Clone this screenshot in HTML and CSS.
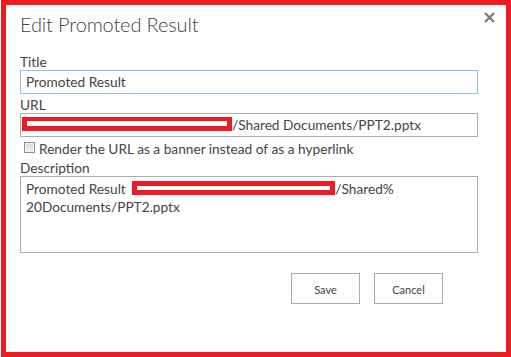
FILE: index.html
```html
<!DOCTYPE html>
<html>
<head>
<meta charset="utf-8">
<link rel="stylesheet" href="styles.css">
</head>
<body>
<div class="frame">
  <div class="header">
    <h1 class="title">Edit Promoted Result</h1>
    <span class="close">
      <svg width="11" height="11" viewBox="0 0 11 11"><path d="M1 1 L10 10 M10 1 L1 10" stroke="#777" stroke-width="2.2" fill="none"/></svg>
    </span>
  </div>
  <div class="label label-first">Title</div>
  <div class="field field-focus">Promoted Result</div>
  <div class="label">URL</div>
  <div class="field"><span class="redact redact-url"></span>/Shared Documents/PPT2.pptx</div>
  <div class="check-row"><span class="checkbox"></span><span>Render the URL as a banner instead of as a hyperlink</span></div>
  <div class="label">Description</div>
  <div class="area">Promoted Result <span class="redact redact-desc"></span>/Shared%<br>20Documents/PPT2.pptx</div>
  <div class="buttons">
    <button class="btn">Save</button>
    <button class="btn">Cancel</button>
  </div>
</div>
</body>
</html>
```
FILE: styles.css
```css
html, body {
  margin: 0;
  padding: 0;
  background: #fff;
}
body {
  font-family: Lato, "Liberation Sans", sans-serif;
  color: #444;
}
.frame {
  box-sizing: border-box;
  width: 510px;
  height: 357px;
  margin-left: 1px;
  border: 5px solid #ed1c24;
  padding: 5px 28px 0 14px;
  background: #fff;
}
.header {
  display: flex;
  justify-content: space-between;
  align-items: flex-start;
  margin-right: -17px;
  height: 28px;
}
.title {
  margin: 0;
  font-size: 20px;
  line-height: 28px;
  font-weight: 300;
  letter-spacing: -0.15px;
  color: #444;
}
.close {
  display: block;
  width: 11px;
  height: 11px;
  margin-top: 2px;
}
.close svg {
  display: block;
}
.label {
  font-size: 13.7px;
  line-height: 17px;
  margin-top: 2px;
}
.label-first {
  margin-top: 15px;
}
.field {
  box-sizing: border-box;
  height: 24px;
  border: 1px solid #ababab;
  padding: 0 5px;
  font-size: 13.7px;
  line-height: 22px;
  white-space: nowrap;
  overflow: hidden;
}
.field-focus {
  border-color: #92c0e0;
}
.redact {
  display: inline-block;
  box-sizing: border-box;
  background: #fff;
  border: 5px solid #ed1c24;
}
.redact-url {
  width: 210px;
  height: 14px;
  border-top-width: 4px;
  margin-left: -4px;
  vertical-align: -1px;
}
.redact-desc {
  width: 203px;
  height: 14px;
  margin-left: 3px;
  vertical-align: -1px;
}
.check-row {
  display: flex;
  align-items: flex-start;
  margin-top: 3px;
  font-size: 13.7px;
  line-height: 17px;
}
.checkbox {
  box-sizing: border-box;
  width: 11px;
  height: 11px;
  margin: 2px 4px 0 4px;
  border: 1px solid #8e8f8f;
  background: linear-gradient(#d8d8d8, #f4f4f4);
  box-shadow: inset 0 0 0 1px #f4f4f4;
}
.area {
  box-sizing: border-box;
  height: 77px;
  border: 1px solid #ababab;
  padding: 3px 5px 0 5px;
  font-size: 13.7px;
  line-height: 18px;
}
.buttons {
  display: flex;
  justify-content: flex-end;
  gap: 14px;
  margin-top: 20px;
  padding-right: 35px;
}
.btn {
  box-sizing: border-box;
  width: 69px;
  height: 31px;
  border: 1px solid #ababab;
  background: #fdfdfd;
  font-family: Lato, "Liberation Sans", sans-serif;
  font-size: 11px;
  color: #444;
  padding: 1px 0 0 0;
  margin: 0;
}
```
